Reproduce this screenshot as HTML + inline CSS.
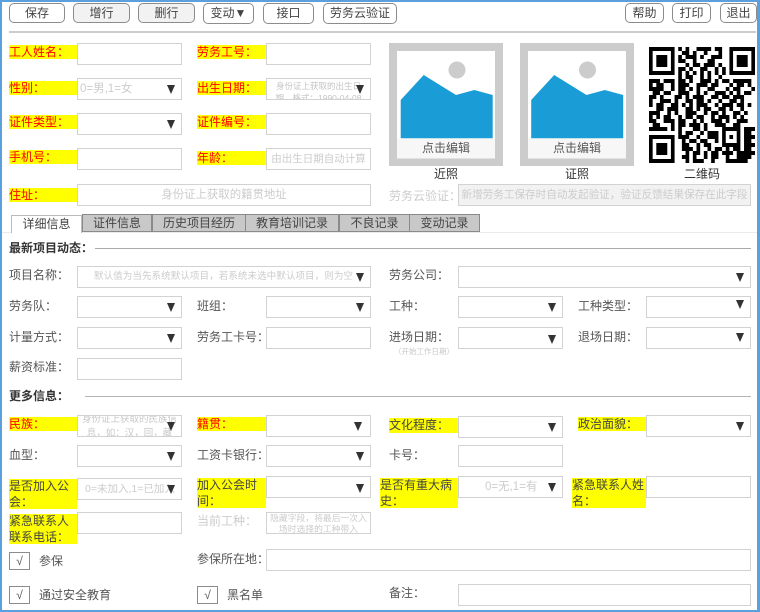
<!DOCTYPE html>
<html lang="zh"><head><meta charset="utf-8"><title>工人信息</title>
<style>
html,body{margin:0;padding:0}
body{width:760px;height:612px;position:relative;overflow:hidden;background:#fff;font-family:"Liberation Sans","Noto Sans CJK SC",sans-serif;font-size:12px;color:#555}
#w{position:absolute;left:0;top:0;width:760px;height:612px;background:#fff;filter:blur(.35px)}
#f{position:absolute;left:0;top:0;width:760px;height:612px;box-sizing:border-box;border:2px solid #5b9fdc;border-right-width:3px}
.a{position:absolute}
.b{position:absolute;box-sizing:border-box;border:1px solid #8c8c8c;border-radius:5px;background:#fff;text-align:center;line-height:19px;font-size:12px;color:#444}
.g{background:#f2f2f2}
.i{position:absolute;box-sizing:border-box;border:1px solid #d2d2d2;background:#fff;height:22px;overflow:hidden;color:#ccc;text-align:center;line-height:20px;font-size:10.500px;white-space:nowrap}
.s{width:105px}
.v:after{content:"";position:absolute;right:6px;top:6px;border-left:4.500px solid transparent;border-right:4.500px solid transparent;border-top:9px solid #333}
.t3:after{top:3px}.t5:after{top:5px}.t7:after{top:7px}.r7:after{right:8px}
.t{position:absolute;white-space:nowrap;line-height:14px;color:#555}
.y{position:absolute;background:#ff0;color:#f00;line-height:14px;white-space:nowrap}
.yy{position:absolute;background:#ff0;color:#444;line-height:15.500px;overflow:hidden}
.h{font-weight:bold;color:#333}
.ln{position:absolute;height:1px;background:#aaa}
.tab{position:absolute;top:214px;height:18px;box-sizing:border-box;border:1px solid #8a8a8a;background:#c8c8c8;text-align:center;line-height:16px;color:#444}
.c{position:absolute;box-sizing:border-box;border:1px solid #8c8c8c;width:21px;height:18px;text-align:center;line-height:16px;color:#555}
.ph{position:absolute;width:114px;height:123px;box-sizing:border-box;border:8px solid #ccc;background:#fff}
.cap{position:absolute;text-align:center;color:#333;line-height:14px}
</style></head><body>
<div id="w">
<div id="f"></div>

<div class="b" style="left:9px;top:3px;width:56px;height:20px">保存</div>
<div class="b g" style="left:73px;top:3px;width:57px;height:20px">增行</div>
<div class="b g" style="left:138px;top:3px;width:57px;height:20px">删行</div>
<div class="b" style="left:203px;top:3px;width:51px;height:21px">变动▼</div>
<div class="b" style="left:263px;top:3px;width:51px;height:21px">接口</div>
<div class="b" style="left:323px;top:3px;width:74px;height:21px">劳务云验证</div>
<div class="b" style="left:625px;top:3px;width:39px;height:20px">帮助</div>
<div class="b" style="left:672px;top:3px;width:39px;height:20px">打印</div>
<div class="b" style="left:720px;top:3px;width:37px;height:20px">退出</div>
<div class="a" style="left:9px;top:31px;width:747px;height:2px;background:#ccc"></div>

<div class="y" style="left:9px;top:45px;width:68px">工人姓名：</div><div class="i s" style="left:77px;top:43px"></div>
<div class="y" style="left:197px;top:45px;width:69px">劳务工号：</div><div class="i s" style="left:266px;top:43px"></div>
<div class="y" style="left:9px;top:81px;width:68px">性别：</div>
<div class="i s v" style="left:77px;top:78px;text-align:left;padding-left:2px;font-size:11.500px">0=男,1=女</div>
<div class="y" style="left:197px;top:81px;width:69px">出生日期：</div>
<div class="i s v" style="left:266px;top:78px;font-size:8.500px;line-height:12px;padding-top:1px;color:#c4c4c4">身份证上获取的出生日<br>期，格式：1990-04-08</div>
<div class="y" style="left:9px;top:115px;width:68px">证件类型：</div><div class="i s v" style="left:77px;top:113px"></div>
<div class="y" style="left:197px;top:115px;width:69px">证件编号：</div><div class="i s" style="left:266px;top:113px"></div>
<div class="y" style="left:9px;top:150px;width:68px">手机号：</div><div class="i s" style="left:77px;top:148px"></div>
<div class="y" style="left:197px;top:151px;width:69px">年龄：</div><div class="i s" style="left:266px;top:148px;font-size:10.500px">由出生日期自动计算</div>
<div class="y" style="left:9px;top:188px;width:68px">住址：</div><div class="i" style="left:77px;top:184px;width:294px;font-size:11.400px">身份证上获取的籍贯地址</div>

<div class="ph" style="left:389px;top:43px"></div>
<div class="ph" style="left:520px;top:43px"></div>
<svg class="a" style="left:389px;top:43px" width="245" height="123" viewBox="389 43 245 123">
<rect x="397" y="138.500" width="98" height="20" fill="#f7f7f7"/><rect x="528" y="138.500" width="98" height="20" fill="#f7f7f7"/>
<circle cx="457" cy="70" r="8.500" fill="#ccc"/><circle cx="587.500" cy="70" r="8.500" fill="#ccc"/>
<path fill="#1a9cd6" d="M400.700 100 423.700 75 456 95 474.300 90 492.700 95V138.300H400.700Z"/>
<path fill="#1a9cd6" d="M531.200 100 554.200 75 586.500 95 604.800 90 623.200 95V138.300H531.200Z"/>
</svg>
<div class="cap" style="left:397px;top:141px;width:98px;color:#555">点击编辑</div>
<div class="cap" style="left:528px;top:141px;width:98px;color:#555">点击编辑</div>
<div class="cap" style="left:389px;top:167px;width:114px">近照</div>
<div class="cap" style="left:520px;top:167px;width:114px">证照</div>
<div class="cap" style="left:649px;top:167px;width:106px">二维码</div>

<svg class="a" style="left:649px;top:47px" width="106" height="116" viewBox="0 0 29 29" preserveAspectRatio="none">
<path fill="none" stroke="#000" stroke-width="1" d="M0 .5h7m1 0h1m1 0h1m2 0h4m1 0h2m2 0h7
M0 1.500h1m5 0h1m2 0h2m1 0h1m2 0h1m3 0h1m2 0h1m5 0h1
M0 2.500h1m1 0h3m1 0h1m1 0h1m1 0h3m1 0h1m2 0h3m2 0h1m1 0h3m1 0h1
M0 3.500h1m1 0h3m1 0h1m1 0h2m2 0h1m3 0h2m4 0h1m1 0h3m1 0h1
M0 4.500h1m1 0h3m1 0h1m3 0h1m1 0h2m1 0h3m1 0h1m2 0h1m1 0h3m1 0h1
M0 5.500h1m5 0h1m1 0h2m1 0h1m2 0h2m2 0h1m1 0h1m1 0h1m5 0h1
M0 6.500h7m1 0h1m1 0h1m1 0h1m1 0h1m1 0h1m1 0h1m1 0h1m1 0h7
M8 7.500h1m1 0h2m2 0h1m1 0h1m2 0h1
M0 8.500h3m1 0h3m1 0h2m1 0h1m2 0h3m1 0h1m1 0h2m1 0h5
M0 9.500h1m1 0h2m2 0h1m1 0h3m2 0h3m1 0h2m3 0h1m1 0h2m1 0h1
M0 10.500h4m2 0h1m1 0h2m1 0h1m1 0h1m2 0h2m3 0h1m1 0h2m3 0h1
M1 11.500h2m1 0h2m2 0h3m2 0h1m1 0h1m2 0h3m1 0h1m1 0h1m1 0h2
M0 12.500h2m1 0h1m3 0h2m1 0h1m1 0h3m2 0h2m1 0h2m1 0h3
M0 13.500h1m2 0h3m1 0h1m2 0h2m1 0h2m1 0h1m2 0h1m2 0h2m1 0h1
M0 14.500h1m1 0h2m2 0h2m1 0h1m1 0h1m1 0h3m2 0h1m1 0h3m1 0h2m1 0h1
M2 15.500h2m1 0h3m2 0h2m1 0h1m1 0h2m2 0h2m1 0h1m2 0h1
M0 16.500h3m2 0h1m1 0h1m2 0h3m2 0h1m1 0h2m1 0h1m2 0h2m1 0h1
M0 17.500h1m1 0h1m1 0h2m2 0h1m1 0h2m1 0h2m2 0h1m1 0h3m1 0h1m1 0h1
M0 18.500h2m2 0h3m1 0h2m2 0h1m1 0h1m2 0h3m1 0h1m2 0h3
M1 19.500h2m3 0h1m1 0h2m1 0h3m1 0h1m2 0h3m2 0h2
M0 20.500h5m1 0h1m1 0h1m3 0h2m1 0h1m4 0h5m1 0h3
M8 21.500h1m1 0h2m2 0h1m1 0h3m1 0h1m3 0h1m1 0h2
M0 22.500h7m1 0h3m2 0h1m2 0h3m1 0h1m1 0h1m1 0h1m1 0h3
M0 23.500h1m5 0h1m2 0h1m1 0h2m1 0h2m2 0h1m1 0h1m3 0h1m1 0h2
M0 24.500h1m1 0h3m1 0h1m2 0h2m2 0h1m1 0h2m3 0h5m1 0h3
M0 25.500h1m1 0h3m1 0h1m2 0h3m1 0h1m2 0h1m1 0h2m1 0h1m1 0h2m1 0h2
M0 26.500h1m1 0h3m1 0h1m3 0h1m1 0h2m1 0h1m1 0h2m1 0h3m1 0h5
M0 27.500h1m5 0h1m2 0h2m1 0h1m2 0h1m1 0h2m2 0h1m2 0h4
M0 28.500h7m3 0h1m1 0h3m2 0h1m3 0h6"/>
</svg>

<div class="t" style="left:389px;top:189px;color:#ccc">劳务云验证：</div>
<div class="i" style="left:458px;top:184px;width:293px;background:#f2f2f2;font-size:10.600px">新增劳务工保存时自动发起验证，验证反馈结果保存在此字段</div>

<div class="a" style="left:2px;top:232px;width:755px;height:1px;background:#eaeaea"></div>
<div class="tab" style="left:11px;width:71px;top:215px;height:18px;background:#fff;border-color:#bbb;border-bottom:0">详细信息</div>
<div class="tab" style="left:82px;width:70px">证件信息</div>
<div class="tab" style="left:152px;width:94px">历史项目经历</div>
<div class="tab" style="left:245px;width:94px">教育培训记录</div>
<div class="tab" style="left:339px;width:71px">不良记录</div>
<div class="tab" style="left:409px;width:71px">变动记录</div>

<div class="t h" style="left:9px;top:241px">最新项目动态：</div><div class="ln" style="left:95px;top:248px;width:656px"></div>
<div class="t" style="left:9px;top:268px">项目名称：</div>
<div class="i v" style="left:77px;top:266px;width:294px;padding-left:16px;font-size:9.600px;text-align:left">默认值为当先系统默认项目，若系统未选中默认项目，则为空</div>
<div class="t" style="left:389px;top:268px">劳务公司：</div><div class="i v" style="left:458px;top:266px;width:293px"></div>
<div class="t" style="left:9px;top:299px">劳务队：</div><div class="i s v" style="left:77px;top:296px"></div>
<div class="t" style="left:197px;top:299px">班组：</div><div class="i s v" style="left:266px;top:296px"></div>
<div class="t" style="left:389px;top:299px">工种：</div><div class="i s v" style="left:458px;top:296px"></div>
<div class="t" style="left:578px;top:299px">工种类型：</div><div class="i s v t3" style="left:646px;top:296px"></div>
<div class="t" style="left:9px;top:330px">计量方式：</div><div class="i s v" style="left:77px;top:327px"></div>
<div class="t" style="left:197px;top:330px">劳务工卡号：</div><div class="i s" style="left:266px;top:327px"></div>
<div class="t" style="left:389px;top:330px">进场日期：</div><div class="i s v t7" style="left:458px;top:327px"></div>
<div class="t" style="left:578px;top:330px">退场日期：</div><div class="i s v t5" style="left:646px;top:327px"></div>
<div class="t" style="left:394px;top:345px;font-size:7.500px;color:#c8c8c8">（开始工作日期）</div>
<div class="t" style="left:9px;top:360px">薪资标准：</div><div class="i s" style="left:77px;top:358px"></div>

<div class="t h" style="left:9px;top:389px">更多信息：</div><div class="ln" style="left:85px;top:396px;width:666px;background:#b4b4b4"></div>

<div class="y" style="left:9px;top:417px;width:68px">民族：</div>
<div class="i s v" style="left:77px;top:415px;font-size:9.500px;line-height:14px;margin-top:0;padding-top:0;color:#c8c8c8"><div style="margin-top:-3px">身份证上获取的民族信<br>息，如：汉，回，藏</div></div>
<div class="y" style="left:197px;top:417px;width:69px">籍贯：</div><div class="i s v r7" style="left:266px;top:415px"></div>
<div class="y" style="left:389px;top:418px;width:69px;color:#444;line-height:15px">文化程度：</div><div class="i s v" style="left:458px;top:416px"></div>
<div class="y" style="left:578px;top:417px;width:68px;color:#444">政治面貌：</div><div class="i s v" style="left:646px;top:415px"></div>

<div class="t" style="left:9px;top:448px">血型：</div><div class="i s v" style="left:77px;top:445px"></div>
<div class="t" style="left:197px;top:448px">工资卡银行：</div><div class="i s v" style="left:266px;top:445px"></div>
<div class="t" style="left:389px;top:448px">卡号：</div><div class="i s" style="left:458px;top:445px"></div>

<div class="yy" style="left:9px;top:479px;width:68px;height:30px">是否加入公会：</div>
<div class="i s v" style="left:77px;top:478px;text-align:left;padding-left:7px;font-size:10.500px">0=未加入,1=已加入</div>
<div class="yy" style="left:197px;top:478px;width:69px;height:30px">加入公会时间：</div><div class="i s v t7" style="left:266px;top:476px"></div>
<div class="yy" style="left:380px;top:478px;width:78px;height:30px">是否有重大病史：</div>
<div class="i s v" style="left:458px;top:476px;text-align:left;padding-left:26px;font-size:11.500px">0=无,1=有</div>
<div class="yy" style="left:572px;top:478px;width:74px;height:30px">紧急联系人姓名：</div><div class="i s" style="left:646px;top:476px"></div>

<div class="yy" style="left:9px;top:514px;width:68px;height:30px">紧急联系人联系电话：</div><div class="i s" style="left:77px;top:512px"></div>
<div class="t" style="left:197px;top:514px;color:#ccc">当前工种：</div>
<div class="i s" style="left:266px;top:512px;font-size:8.800px;line-height:11px;padding-top:0">隐藏字段，将最后一次入<br>场时选择的工种带入</div>

<div class="c" style="left:9px;top:552px">√</div><div class="t" style="left:39px;top:554px">参保</div>
<div class="t" style="left:197px;top:552px">参保所在地：</div><div class="i" style="left:266px;top:549px;width:485px"></div>
<div class="c" style="left:9px;top:586px">√</div><div class="t" style="left:39px;top:588px">通过安全教育</div>
<div class="c" style="left:197px;top:586px">√</div><div class="t" style="left:227px;top:588px">黑名单</div>
<div class="t" style="left:389px;top:586px">备注：</div><div class="i" style="left:458px;top:584px;width:293px"></div>
</div>
</body></html>
